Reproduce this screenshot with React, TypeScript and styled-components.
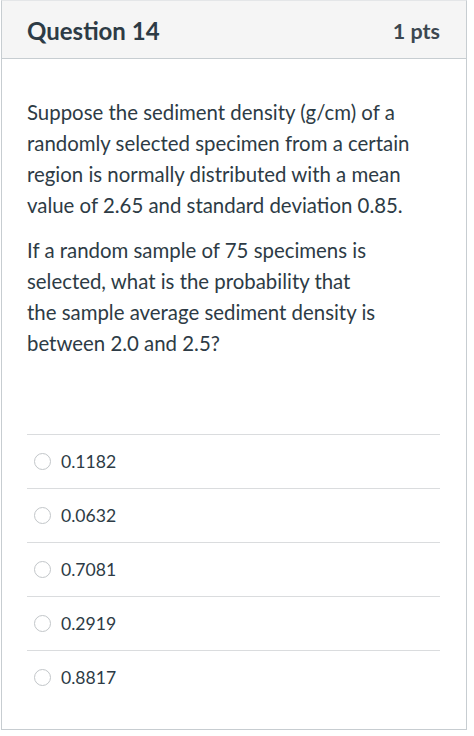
import React from "react";
import styled, { createGlobalStyle } from "styled-components";

const Global = createGlobalStyle`
  html, body { margin: 0; padding: 0; background: #fff; }
  body { font-family: Lato, "Open Sans", sans-serif; color: #2d3b45; }
  * { box-sizing: border-box; }
`;

const Card = styled.div`
  width: 466px;
  margin: 0 0 7px 1px;
  border: 1px solid #c7cdd1;
  border-top-color: #e4e6e8;
  background: #fff;
`;

const Header = styled.div`
  height: 58px;
  background: #f5f5f5;
  border-bottom: 1px solid #c7cdd1;
  display: flex;
  align-items: center;
  justify-content: space-between;
  padding: 2px 26px 0 25px;
`;

const Title = styled.div`
  font-size: 24px;
  font-weight: 700;
  color: #2d3b45;
`;

const Points = styled.div`
  font-size: 21.5px;
  font-weight: 700;
  color: #3c4750;
`;

const Body = styled.div`
  padding: 38px 20px 25px 25px;
`;

const Para = styled.p`
  margin: 0 0 14px;
  font-size: 20.4px;
  line-height: 31px;
  color: #2d3b45;
  white-space: nowrap;
`;

const Answers = styled.div`
  margin-top: 75px;
  margin-right: 6px;
`;

const Row = styled.label`
  display: flex;
  align-items: center;
  height: 54px;
  border-top: 1px solid #dadcde;
  padding-left: 7px;
  gap: 10px;
`;

const Radio = styled.span`
  width: 17px;
  height: 17px;
  border-radius: 50%;
  border: 1px solid #c2c6c9;
  background: #fff;
  flex: none;
`;

const AnswerText = styled.span`
  font-size: 17.6px;
  color: #2d3b45;
`;

const answers = ["0.1182", "0.0632", "0.7081", "0.2919", "0.8817"];

const para1 = [
  "Suppose the sediment density (g/cm) of a",
  "randomly selected specimen from a certain",
  "region is normally distributed with a mean",
  "value of 2.65 and standard deviation 0.85.",
];

const para2 = [
  "If a random sample of 75 specimens is",
  "selected, what is the probability that",
  "the sample average sediment density is",
  "between 2.0 and 2.5?",
];

function Lines({ lines }: { lines: string[] }) {
  return (
    <Para>
      {lines.map((l, i) => (
        <React.Fragment key={i}>
          {l}
          {i < lines.length - 1 && <br />}
        </React.Fragment>
      ))}
    </Para>
  );
}

export default function App() {
  return (
    <>
      <Global />
      <Card>
        <Header>
          <Title>Question 14</Title>
          <Points>1 pts</Points>
        </Header>
        <Body>
          <Lines lines={para1} />
          <Lines lines={para2} />
          <Answers>
            {answers.map((a) => (
              <Row key={a}>
                <Radio />
                <AnswerText>{a}</AnswerText>
              </Row>
            ))}
          </Answers>
        </Body>
      </Card>
    </>
  );
}
